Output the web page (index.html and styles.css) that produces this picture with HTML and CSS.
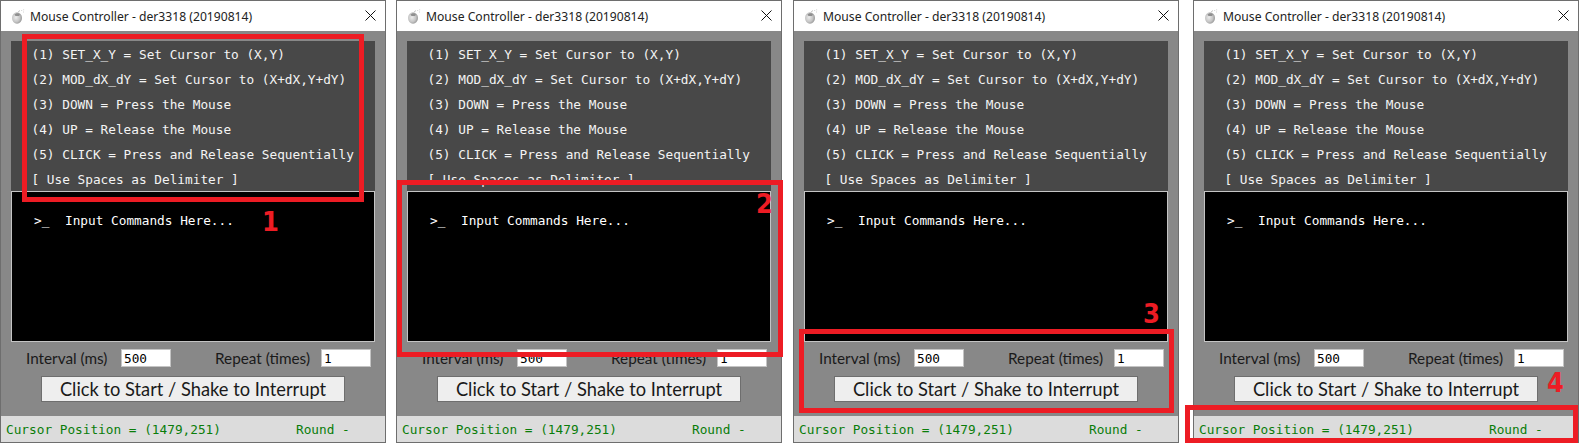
FILE: index.html
```html
<!DOCTYPE html>
<html lang="en">
<head>
    <meta charset="UTF-8">
    <title>Mouse Controller</title>
    <link rel="stylesheet" href="styles.css">
</head>
<body>
    <!-- mouse icon, used in all four title bars -->
    <svg class="defs" width="0" height="0">
        <defs>
            <radialGradient id="shell-fill" cx=".4" cy=".45" r=".65">
                <stop offset="0" stop-color="#ececec"/>
                <stop offset=".6" stop-color="#c4c4c4"/>
                <stop offset="1" stop-color="#8c8c8c"/>
            </radialGradient>
        </defs>
        <symbol id="mouse" viewBox="0 0 13 15">
            <ellipse cx="5.5" cy="9" rx="5" ry="5.8" fill="url(#shell-fill)"/>
            <path d="M3 5.5 5 4.2h2L8.5 5.5 7.5 7H4z" fill="#8f8f8f"/>
            <path d="M7 3 8 1.5M10 1.5h.6M12 .8h.6M11.5 3h.6" stroke="#b5b5b5" fill="none"/>
        </symbol>
    </svg>

    <div class="shots">
        <div class="window win-1">
            <div class="titlebar">
                <svg class="mouse-icon"><use href="#mouse"/></svg>
                <span class="title-text">Mouse Controller - der3318 (20190814)</span>
                <svg class="close-icon" viewBox="0 0 11 11"><path d="M.5.5l10 10M10.5.5l-10 10"/></svg>
            </div>
            <div class="body">
                <div class="help">
                    <p>(1) SET_X_Y = Set Cursor to (X,Y)</p>
                    <p>(2) MOD_dX_dY = Set Cursor to (X+dX,Y+dY)</p>
                    <p>(3) DOWN = Press the Mouse</p>
                    <p>(4) UP = Release the Mouse</p>
                    <p>(5) CLICK = Press and Release Sequentially</p>
                    <p>[ Use Spaces as Delimiter ]</p>
                </div>
                <div class="console"><span class="prompt">&gt;_</span><span>Input Commands Here...</span></div>
                <div class="fields">
                    <label class="field-label label-interval">Interval (ms)</label>
                    <input class="field-input" type="text" value="500">
                    <label class="field-label label-repeat">Repeat (times)</label>
                    <input class="field-input" type="text" value="1">
                </div>
                <button class="start">Click to Start / Shake to Interrupt</button>
            </div>
            <div class="status"><span class="cursor-pos">Cursor Position = (1479,251)</span><span>Round -</span></div>
        </div>

        <div class="window win-2">
            <div class="titlebar">
                <svg class="mouse-icon"><use href="#mouse"/></svg>
                <span class="title-text">Mouse Controller - der3318 (20190814)</span>
                <svg class="close-icon" viewBox="0 0 11 11"><path d="M.5.5l10 10M10.5.5l-10 10"/></svg>
            </div>
            <div class="body">
                <div class="help">
                    <p>(1) SET_X_Y = Set Cursor to (X,Y)</p>
                    <p>(2) MOD_dX_dY = Set Cursor to (X+dX,Y+dY)</p>
                    <p>(3) DOWN = Press the Mouse</p>
                    <p>(4) UP = Release the Mouse</p>
                    <p>(5) CLICK = Press and Release Sequentially</p>
                    <p>[ Use Spaces as Delimiter ]</p>
                </div>
                <div class="console"><span class="prompt">&gt;_</span><span>Input Commands Here...</span></div>
                <div class="fields">
                    <label class="field-label label-interval">Interval (ms)</label>
                    <input class="field-input" type="text" value="500">
                    <label class="field-label label-repeat">Repeat (times)</label>
                    <input class="field-input" type="text" value="1">
                </div>
                <button class="start">Click to Start / Shake to Interrupt</button>
            </div>
            <div class="status"><span class="cursor-pos">Cursor Position = (1479,251)</span><span>Round -</span></div>
        </div>

        <div class="window win-3">
            <div class="titlebar">
                <svg class="mouse-icon"><use href="#mouse"/></svg>
                <span class="title-text">Mouse Controller - der3318 (20190814)</span>
                <svg class="close-icon" viewBox="0 0 11 11"><path d="M.5.5l10 10M10.5.5l-10 10"/></svg>
            </div>
            <div class="body">
                <div class="help">
                    <p>(1) SET_X_Y = Set Cursor to (X,Y)</p>
                    <p>(2) MOD_dX_dY = Set Cursor to (X+dX,Y+dY)</p>
                    <p>(3) DOWN = Press the Mouse</p>
                    <p>(4) UP = Release the Mouse</p>
                    <p>(5) CLICK = Press and Release Sequentially</p>
                    <p>[ Use Spaces as Delimiter ]</p>
                </div>
                <div class="console"><span class="prompt">&gt;_</span><span>Input Commands Here...</span></div>
                <div class="fields">
                    <label class="field-label label-interval">Interval (ms)</label>
                    <input class="field-input" type="text" value="500">
                    <label class="field-label label-repeat">Repeat (times)</label>
                    <input class="field-input" type="text" value="1">
                </div>
                <button class="start">Click to Start / Shake to Interrupt</button>
            </div>
            <div class="status"><span class="cursor-pos">Cursor Position = (1479,251)</span><span>Round -</span></div>
        </div>

        <div class="window win-4">
            <div class="titlebar">
                <svg class="mouse-icon"><use href="#mouse"/></svg>
                <span class="title-text">Mouse Controller - der3318 (20190814)</span>
                <svg class="close-icon" viewBox="0 0 11 11"><path d="M.5.5l10 10M10.5.5l-10 10"/></svg>
            </div>
            <div class="body">
                <div class="help">
                    <p>(1) SET_X_Y = Set Cursor to (X,Y)</p>
                    <p>(2) MOD_dX_dY = Set Cursor to (X+dX,Y+dY)</p>
                    <p>(3) DOWN = Press the Mouse</p>
                    <p>(4) UP = Release the Mouse</p>
                    <p>(5) CLICK = Press and Release Sequentially</p>
                    <p>[ Use Spaces as Delimiter ]</p>
                </div>
                <div class="console"><span class="prompt">&gt;_</span><span>Input Commands Here...</span></div>
                <div class="fields">
                    <label class="field-label label-interval">Interval (ms)</label>
                    <input class="field-input" type="text" value="500">
                    <label class="field-label label-repeat">Repeat (times)</label>
                    <input class="field-input" type="text" value="1">
                </div>
                <button class="start">Click to Start / Shake to Interrupt</button>
            </div>
            <div class="status"><span class="cursor-pos">Cursor Position = (1479,251)</span><span>Round -</span></div>
        </div>

        <!-- red marks drawn over the screenshots -->
        <div class="mark mark-1"></div>
        <div class="mark mark-2"></div>
        <div class="mark mark-3"></div>
        <div class="mark mark-4"></div>
        <span class="num num-1">1</span>
        <span class="num num-2">2</span>
        <span class="num num-3">3</span>
        <span class="num num-4">4</span>
    </div>
</body>
</html>
```

FILE: styles.css
```css
html, body {
    margin: 0;
    padding: 0;
    background: #fff;
    overflow: hidden;
}
.defs {
    position: absolute;
}
.shots {
    position: relative;
    display: flex;
    width: 1580px;
    height: 443px;
}
.window {
    width: 386px;
    height: 443px;
    box-sizing: border-box;
    display: flex;
    flex-direction: column;
    flex-shrink: 0;
    border: 1px solid #6e6e6e;
}
.win-2 { margin-left: 10px; }
.win-3 { margin-left: 11px; }
.win-4 { margin-left: 14px; }

.titlebar {
    height: 30px;
    display: flex;
    align-items: center;
    padding-left: 10px;
    background: #fff;
    flex-shrink: 0;
}
.mouse-icon {
    width: 14px;
    height: 15px;
    margin-right: 5px;
}
.title-text {
    font-family: "Noto Sans", sans-serif;
    font-size: 12.15px;
    color: #222;
    flex: 1;
}
.close-icon {
    width: 11px;
    height: 11px;
    margin: 0 9px 2px 0;
}
.close-icon path { stroke: #111; stroke-width: 1; fill: none; }

.body {
    flex: 1;
    background: #888;
    padding: 10px 10px 0;
    display: flex;
    flex-direction: column;
}
.help {
    height: 150px;
    box-sizing: border-box;
    padding: 1px 0 0 20.5px;
    background: #484848;
    font-family: "DejaVu Sans Mono", monospace;
    font-size: 12.75px;
    color: #f4f4f4;
}
.help p {
    margin: 0;
    height: 25px;
    line-height: 25px;
    white-space: pre;
}
.console {
    height: 151px;
    box-sizing: border-box;
    border: 1px solid #c4c4c4;
    background: #000;
    padding: 20px 0 0 22px;
    font-family: "DejaVu Sans Mono", monospace;
    font-size: 12.75px;
    line-height: 18px;
    color: #fff;
}
.prompt {
    display: inline-block;
    width: 31px;
}
.fields {
    display: flex;
    align-items: center;
    height: 18px;
    margin-top: 7px;
    padding-left: 15px;
}
.field-label {
    font-family: "Lato", sans-serif;
    font-size: 15.3px;
    color: #1a1a1a;
}
.label-interval { width: 95px; }
.label-repeat { width: 106px; margin-left: 44px; }
.field-input {
    width: 50px;
    height: 18px;
    box-sizing: border-box;
    border: 1px solid #c4c4c4;
    background: #fff;
    padding: 0 2px;
    font-family: "DejaVu Sans Mono", monospace;
    font-size: 12.75px;
    color: #000;
}
.start {
    width: 304px;
    height: 26px;
    margin: 9px 0 0 30px;
    box-sizing: border-box;
    border: 1px solid #6e6e6e;
    background: #eee;
    padding: 0 0 1px;
    font-family: "Lato", sans-serif;
    font-size: 18.3px;
    color: #1a1a1a;
}
.status {
    height: 26px;
    flex-shrink: 0;
    display: flex;
    align-items: center;
    padding-left: 5px;
    background: #dcdcdc;
    font-family: "DejaVu Sans Mono", monospace;
    font-size: 12.75px;
    color: #0a7d0a;
}
.cursor-pos { width: 290px; }

.mark {
    position: absolute;
    box-sizing: border-box;
    border: 5px solid #ed1c24;
}
.mark-1 { left: 22px; top: 34px; width: 342px; height: 168px; }
.mark-2 { left: 397px; top: 180px; width: 386px; height: 177px; }
.mark-3 { left: 799px; top: 329px; width: 375px; height: 84px; }
.mark-4 { left: 1185px; top: 405px; width: 393px; height: 38px; }
.num {
    position: absolute;
    font-family: "DejaVu Sans Condensed", "DejaVu Sans", sans-serif;
    font-stretch: condensed;
    font-weight: bold;
    font-size: 27px;
    line-height: 28px;
    color: #ed1c24;
}
.num-1 { left: 262px; top: 208px; }
.num-2 { left: 756px; top: 190px; }
.num-3 { left: 1143px; top: 300px; }
.num-4 { left: 1547px; top: 369px; }
```
